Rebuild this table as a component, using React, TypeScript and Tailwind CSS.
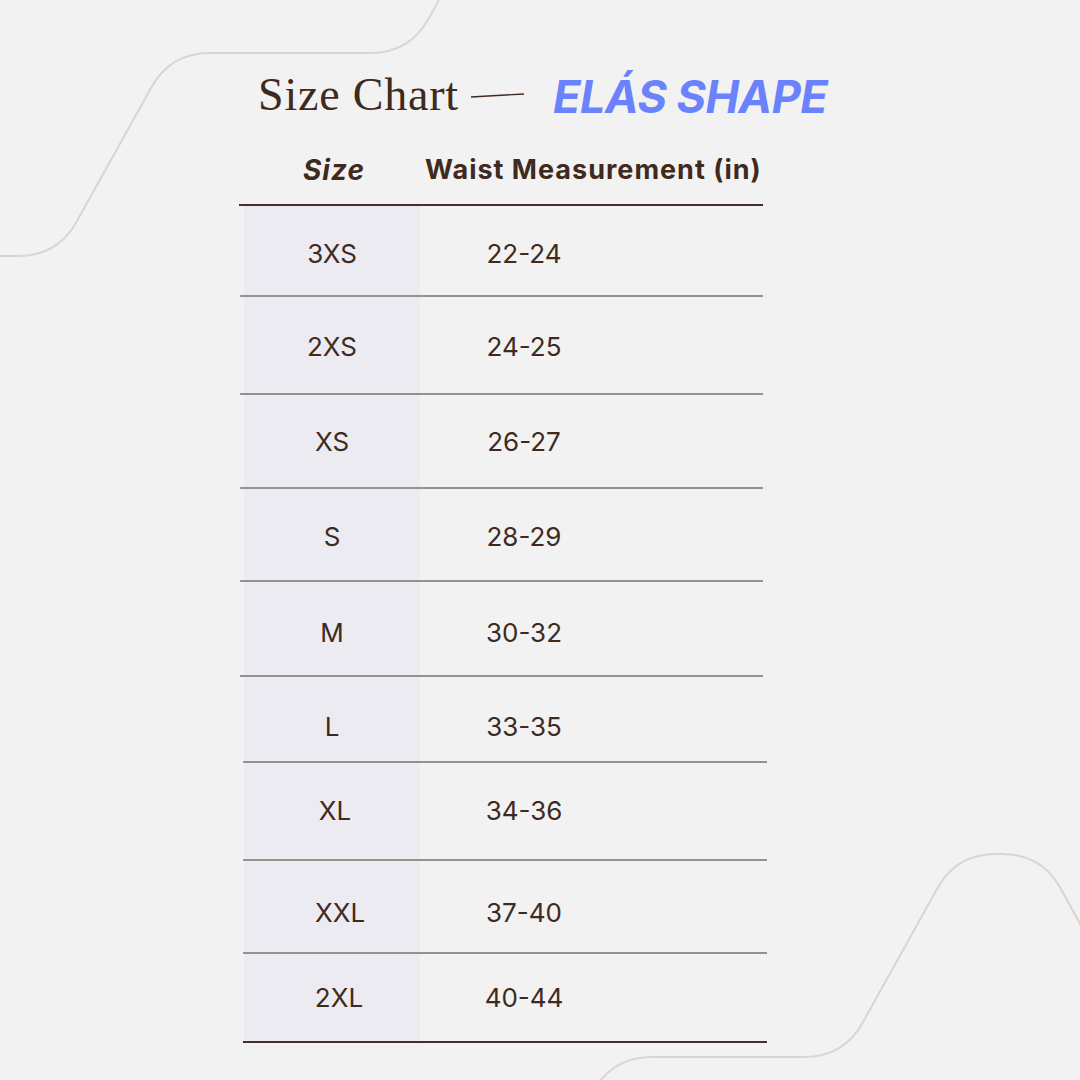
import React from "react";

type Row = { size: string; val: string; h: string; pad: string; sx: string; line: string };

const rows: Row[] = [
  { size: "3XS", val: "22-24", h: "h-[89px]", pad: "pt-[5px]", sx: "", line: "gray-a" },
  { size: "2XS", val: "24-25", h: "h-[96px]", pad: "pt-[2px]", sx: "", line: "gray-a" },
  { size: "XS", val: "26-27", h: "h-[92px]", pad: "", sx: "", line: "gray-a" },
  { size: "S", val: "28-29", h: "h-[91px]", pad: "pt-[3px]", sx: "", line: "gray-a" },
  { size: "M", val: "30-32", h: "h-[93px]", pad: "pt-[7px]", sx: "", line: "gray-a" },
  { size: "L", val: "33-35", h: "h-[84px]", pad: "pt-[14px]", sx: "", line: "gray-b" },
  { size: "XL", val: "34-36", h: "h-[96px]", pad: "pb-[2px]", sx: "pl-[6px]", line: "gray-b" },
  { size: "XXL", val: "37-40", h: "h-[91px]", pad: "pt-[11px]", sx: "pl-[16px]", line: "gray-b" },
  { size: "2XL", val: "40-44", h: "h-[87px]", pad: "", sx: "pl-[14px]", line: "dark" },
];

function Line({ kind }: { kind: string }) {
  if (kind === "gray-a") return <div className="h-[2px] w-[523px] ml-[-4px] bg-[#9a8f89]" />;
  if (kind === "gray-b") return <div className="h-[2px] w-[524px] ml-[-1px] bg-[#9a8f89]" />;
  return <div className="h-[2px] w-[524px] ml-[-1px] bg-[#43302a]" />;
}

export default function App() {
  return (
    <div className="relative w-[1080px] h-[1080px] overflow-hidden bg-[#f2f2f2] text-[#3f2a20] font-['Inter',sans-serif]">
      <svg
        className="absolute inset-0 pointer-events-none"
        width="1080"
        height="1080"
        viewBox="0 0 1080 1080"
        fill="none"
      >
        <path
          d="M -20 256 L 18 256 Q 58 256 77 221 L 151 88 Q 170 53 210 53 L 370 53 Q 410 53 429 18 L 445 -11"
          stroke="#ddd4ce"
          strokeWidth="2"
        />
        <path
          d="M 573 1127 L 593 1092 Q 612 1057 652 1057 L 804 1057 Q 844 1057 863 1022 L 937 889 Q 956 854 996 854 L 1002 854 Q 1042 854 1061 889 L 1100 960"
          stroke="#ddd4ce"
          strokeWidth="2"
        />
      </svg>

      <div className="relative flex flex-col pl-[244px] pt-[72px]">
        {/* Title */}
        <div className="flex items-start ml-[14px] h-[46px]">
          <span className="w-[213px] text-[46px] leading-[46px] tracking-[0.8px] font-['Liberation_Serif',serif] text-[#3f2a20] whitespace-nowrap">
            Size Chart
          </span>
          <svg width="53" height="46" viewBox="0 0 53 46" className="shrink-0">
            <line x1="0" y1="25" x2="53" y2="22" stroke="#3f2a20" strokeWidth="1.4" />
          </svg>
          <span className="ml-[29px] mt-[2px] text-[45px] leading-[45px] font-bold italic text-[#6a82fb] whitespace-nowrap tracking-[-0.5px]">
            ELÁS SHAPE
          </span>
        </div>

        {/* Header */}
        <div className="flex items-center h-[40px] mt-[32px]">
          <div className="w-[176px] text-center pl-[4px] text-[28px] tracking-[1px] font-bold italic">Size</div>
          <div className="pl-[5px] text-[27px] tracking-[1px] font-bold whitespace-nowrap">Waist Measurement (in)</div>
        </div>
        <div className="mt-[14px] h-[2px] w-[524px] ml-[-5px] bg-[#43302a]" />

        {rows.map((r) => (
          <React.Fragment key={r.size}>
            <div className={`flex ${r.h}`}>
              <div className={`w-[176px] bg-[#ebebf1] flex items-center justify-center text-[26px] ${r.pad} ${r.sx}`}>
                {r.size}
              </div>
              <div className={`w-[208px] flex items-center justify-center text-[26px] ${r.pad}`}>{r.val}</div>
            </div>
            <Line kind={r.line} />
          </React.Fragment>
        ))}
      </div>
    </div>
  );
}
